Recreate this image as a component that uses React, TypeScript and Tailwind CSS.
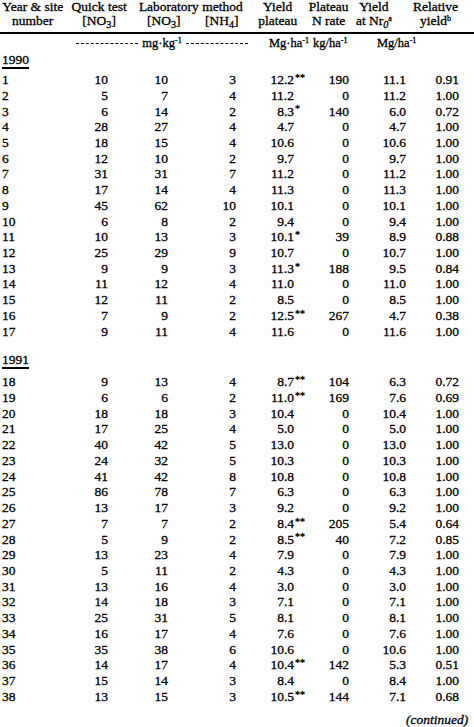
type R = [string, string, string, string, string, string, string, string, string];

const y1990: R[] = [
  ["1", "10", "10", "3", "12.2", "**", "190", "11.1", "0.91"],
  ["2", "5", "7", "4", "11.2", "", "0", "11.2", "1.00"],
  ["3", "6", "14", "2", "8.3", "*", "140", "6.0", "0.72"],
  ["4", "28", "27", "4", "4.7", "", "0", "4.7", "1.00"],
  ["5", "18", "15", "4", "10.6", "", "0", "10.6", "1.00"],
  ["6", "12", "10", "2", "9.7", "", "0", "9.7", "1.00"],
  ["7", "31", "31", "7", "11.2", "", "0", "11.2", "1.00"],
  ["8", "17", "14", "4", "11.3", "", "0", "11.3", "1.00"],
  ["9", "45", "62", "10", "10.1", "", "0", "10.1", "1.00"],
  ["10", "6", "8", "2", "9.4", "", "0", "9.4", "1.00"],
  ["11", "10", "13", "3", "10.1", "*", "39", "8.9", "0.88"],
  ["12", "25", "29", "9", "10.7", "", "0", "10.7", "1.00"],
  ["13", "9", "9", "3", "11.3", "*", "188", "9.5", "0.84"],
  ["14", "11", "12", "4", "11.0", "", "0", "11.0", "1.00"],
  ["15", "12", "11", "2", "8.5", "", "0", "8.5", "1.00"],
  ["16", "7", "9", "2", "12.5", "**", "267", "4.7", "0.38"],
  ["17", "9", "11", "4", "11.6", "", "0", "11.6", "1.00"],
];

const y1991: R[] = [
  ["18", "9", "13", "4", "8.7", "**", "104", "6.3", "0.72"],
  ["19", "6", "6", "2", "11.0", "**", "169", "7.6", "0.69"],
  ["20", "18", "18", "3", "10.4", "", "0", "10.4", "1.00"],
  ["21", "17", "25", "4", "5.0", "", "0", "5.0", "1.00"],
  ["22", "40", "42", "5", "13.0", "", "0", "13.0", "1.00"],
  ["23", "24", "32", "5", "10.3", "", "0", "10.3", "1.00"],
  ["24", "41", "42", "8", "10.8", "", "0", "10.8", "1.00"],
  ["25", "86", "78", "7", "6.3", "", "0", "6.3", "1.00"],
  ["26", "13", "17", "3", "9.2", "", "0", "9.2", "1.00"],
  ["27", "7", "7", "2", "8.4", "**", "205", "5.4", "0.64"],
  ["28", "5", "9", "2", "8.5", "**", "40", "7.2", "0.85"],
  ["29", "13", "23", "4", "7.9", "", "0", "7.9", "1.00"],
  ["30", "5", "11", "2", "4.3", "", "0", "4.3", "1.00"],
  ["31", "13", "16", "4", "3.0", "", "0", "3.0", "1.00"],
  ["32", "14", "18", "3", "7.1", "", "0", "7.1", "1.00"],
  ["33", "25", "31", "5", "8.1", "", "0", "8.1", "1.00"],
  ["34", "16", "17", "4", "7.6", "", "0", "7.6", "1.00"],
  ["35", "35", "38", "6", "10.6", "", "0", "10.6", "1.00"],
  ["36", "14", "17", "4", "10.4", "**", "142", "5.3", "0.51"],
  ["37", "15", "14", "3", "8.4", "", "0", "8.4", "1.00"],
  ["38", "13", "15", "3", "10.5", "**", "144", "7.1", "0.68"],
];

function Row({ r }: { r: R }) {
  return (
    <div className="flex h-[15.72px] items-center leading-none">
      <div className="w-[60px] pl-[2px]">{r[0]}</div>
      <div className="w-[48px] text-right">{r[1]}</div>
      <div className="w-[60px] text-right">{r[2]}</div>
      <div className="w-[68px] text-right">{r[3]}</div>
      <div className="w-[58px] text-right">{r[4]}</div>
      <div className="w-[26px] self-start pl-[1px] pt-[1px] text-[10px] leading-none">{r[5]}</div>
      <div className="w-[29px] text-right">{r[6]}</div>
      <div className="w-[57px] text-right">{r[7]}</div>
      <div className="w-[53px] text-right">{r[8]}</div>
    </div>
  );
}

function YearLabel({ year }: { year: string }) {
  return (
    <div className="h-[16px] pl-[2px] leading-[16px]">
      <span className="underline decoration-[1.5px] underline-offset-[3px]">{year}</span>
    </div>
  );
}

function Unit({ children }: { children: React.ReactNode }) {
  return <div className="whitespace-nowrap">{children}</div>;
}

export default function App() {
  return (
    <div className="h-[727px] w-[474px] overflow-hidden bg-white text-[13.5px] text-black [-webkit-text-stroke:0.3px_black] [font-family:'Liberation_Serif','Times_New_Roman',serif]">
      {/* header */}
      <div className="flex">
        <div className="w-[68px] text-center">
          <div className="leading-[14px]">Year &amp; site</div>
          <div className="-mt-[1px] leading-[16px]">number</div>
        </div>
        <div className="w-[70px] text-center">
          <div className="leading-[14px]">Quick test</div>
          <div className="-mt-[1px] leading-[16px]">
            [NO<sub>3</sub>]
          </div>
        </div>
        <div className="w-[120px]">
          <div className="text-center whitespace-nowrap leading-[14px]">Laboratory method</div>
          <div className="-mt-[1px] flex leading-[16px]">
            <div className="w-[62px] text-center">
              [NO<sub>3</sub>]
            </div>
            <div className="w-[54px] text-center">
              [NH<sub>4</sub>]
            </div>
          </div>
        </div>
        <div className="w-[60px] text-center">
          <div className="leading-[14px]">Yield</div>
          <div className="-mt-[1px] leading-[16px]">plateau</div>
        </div>
        <div className="w-[46px] text-center whitespace-nowrap">
          <div className="leading-[14px]">Plateau</div>
          <div className="-mt-[1px] leading-[16px]">N rate</div>
        </div>
        <div className="w-[48px] text-center whitespace-nowrap">
          <div className="leading-[14px]">Yield</div>
          <div className="-mt-[1px] leading-[16px]">
            at Nr<sub className="italic">0</sub>
            <sup className="text-[8px]">a</sup>
          </div>
        </div>
        <div className="w-[80px] text-center whitespace-nowrap">
          <div className="leading-[14px]">Relative</div>
          <div className="-mt-[1px] leading-[16px]">
            yield<sup className="text-[8px]">b</sup>
          </div>
        </div>
      </div>

      <div className="mt-[3px] border-t-2 border-black" />

      {/* units */}
      <div className="mt-[1px] flex h-[16px] items-center text-[12.5px] leading-none">
        <div className="w-[76px]" />
        <div className="flex w-[172px] items-center gap-[4px]">
          <div className="flex-1 border-t border-dashed border-black" />
          <Unit>
            mg·kg<sup className="text-[8px]">-1</sup>
          </Unit>
          <div className="flex-1 border-t border-dashed border-black" />
        </div>
        <div className="w-[21px]" />
        <div className="w-[44px]">
          <Unit>
            Mg·ha<sup className="text-[8px]">-1</sup>
          </Unit>
        </div>
        <div className="w-[64px]">
          <Unit>
            kg/ha<sup className="text-[8px]">-1</sup>
          </Unit>
        </div>
        <Unit>
          Mg/ha<sup className="text-[8px]">-1</sup>
        </Unit>
      </div>

      <div className="mt-[1px]">
        <YearLabel year="1990" />
      </div>
      <div className="mt-[4px]">
        {y1990.map((r) => (
          <Row key={r[0]} r={r} />
        ))}
      </div>

      <div className="mt-[13px]">
        <YearLabel year="1991" />
      </div>
      <div className="mt-[6px]">
        {y1991.map((r) => (
          <Row key={r[0]} r={r} />
        ))}
      </div>

      <div className="mt-[9px] pl-[406px] italic whitespace-nowrap leading-[14px]">(continued)</div>
    </div>
  );
}
